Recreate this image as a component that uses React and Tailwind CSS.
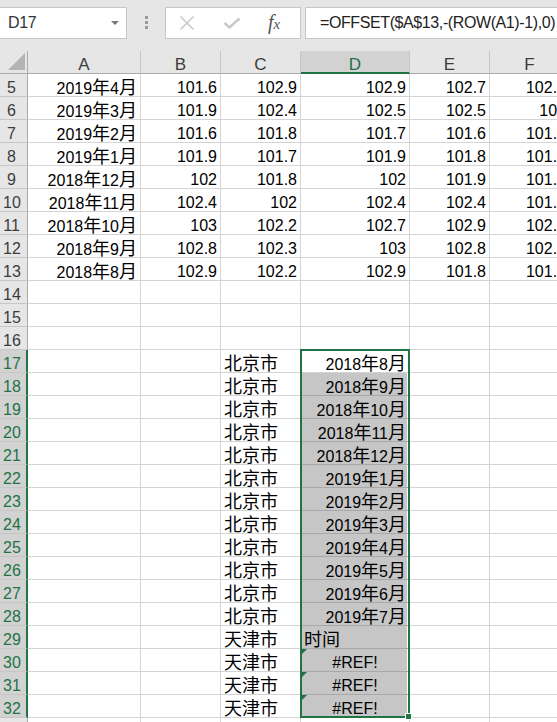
import React from "react";

const GREEN = "#217346";

const W = {
  A: "w-[113px]",
  B: "w-[80px]",
  C: "w-[80px]",
  D: "w-[109px]",
  E: "w-[80px]",
  F: "w-[80px]",
};
const COLS = ["A", "B", "C", "D", "E", "F"];

const dataRows = [
  [5, "2019年4月", "101.6", "102.9", "102.9", "102.7", "102.1"],
  [6, "2019年3月", "101.9", "102.4", "102.5", "102.5", "102"],
  [7, "2019年2月", "101.6", "101.8", "101.7", "101.6", "101.4"],
  [8, "2019年1月", "101.9", "101.7", "101.9", "101.8", "101.6"],
  [9, "2018年12月", "102", "101.8", "102", "101.9", "101.6"],
  [10, "2018年11月", "102.4", "102", "102.4", "102.4", "101.6"],
  [11, "2018年10月", "103", "102.2", "102.7", "102.9", "102.1"],
  [12, "2018年9月", "102.8", "102.3", "103", "102.8", "102.3"],
  [13, "2018年8月", "102.9", "102.2", "102.9", "101.8", "101.6"],
];

const months = [
  "2018年8月",
  "2018年9月",
  "2018年10月",
  "2018年11月",
  "2018年12月",
  "2019年1月",
  "2019年2月",
  "2019年3月",
  "2019年4月",
  "2019年5月",
  "2019年6月",
  "2019年7月",
];

function buildRows() {
  const rows = [];
  dataRows.forEach((r) => {
    const cells = {};
    COLS.forEach((c, i) => {
      cells[c] = { t: r[i + 1], align: "right" };
    });
    rows.push({ n: r[0], cells });
  });
  [14, 15, 16].forEach((n) => rows.push({ n, cells: {} }));
  months.forEach((m, i) => {
    rows.push({
      n: 17 + i,
      sel: true,
      cells: {
        C: { t: "北京市", align: "left" },
        D: { t: m, align: "right", gray: i > 0 },
      },
    });
  });
  rows.push({
    n: 29,
    sel: true,
    cells: {
      C: { t: "天津市", align: "left" },
      D: { t: "时间", align: "left", gray: true },
    },
  });
  [30, 31, 32].forEach((n) =>
    rows.push({
      n,
      sel: true,
      cells: {
        C: { t: "天津市", align: "left" },
        D: { t: "#REF!", align: "center", gray: true, err: true },
      },
    })
  );
  rows.push({ n: 33, cells: {} });
  return rows;
}

function Txt({ t }) {
  const parts = [];
  let buf = "";
  let cjk = null;
  for (const ch of t) {
    const isC = /[\u3000-\u9fff]/.test(ch);
    if (cjk === null || isC === cjk) {
      buf += ch;
    } else {
      parts.push({ s: buf, c: cjk });
      buf = ch;
    }
    cjk = isC;
  }
  if (buf) parts.push({ s: buf, c: cjk });
  return (
    <>
      {parts.map((p, i) =>
        p.c ? (
          <span key={i} className="text-[18px]">
            {p.s}
          </span>
        ) : (
          <span key={i}>{p.s}</span>
        )
      )}
    </>
  );
}

function Cell({ col, cell }) {
  const align =
    cell && cell.align === "left"
      ? "text-left pl-[3px]"
      : cell && cell.align === "center"
      ? "text-center"
      : "text-right pr-[3px]";
  const gray =
    cell && cell.gray
      ? "bg-[#c6c6c6] border-b-[#a8a8a8] shadow-[inset_-2px_0_0_#ffffff]"
      : "bg-white";
  return (
    <div
      className={`${W[col]} ${align} ${gray} relative h-[23px] shrink-0 whitespace-nowrap border-r border-b border-[#d4d4d4] pt-[6px] text-[16px] leading-[16px] text-black`}
    >
      {cell && cell.err && (
        <svg
          className="absolute left-0 top-0"
          width="7"
          height="7"
          viewBox="0 0 7 7"
        >
          <polygon points="0,0 6,0 0,6" fill="#1e7145" />
        </svg>
      )}
      {cell ? <Txt t={cell.t} /> : ""}
    </div>
  );
}

function RowHeader({ n, sel }) {
  return (
    <div
      className={
        sel
          ? "w-[28px] h-[23px] shrink-0 border-b border-[#c6c6c6] border-r-2 border-r-[#217346] bg-[#d2d2d2] pt-[6px] pl-[3px] text-[16px] leading-[16px] text-[#217346]"
          : "w-[28px] h-[23px] shrink-0 border-b border-[#c6c6c6] border-r border-r-[#ababab] bg-[#e6e6e6] pt-[6px] pl-[3px] text-[16px] leading-[16px] text-[#3c3c3c]"
      }
    >
      <div className="w-[17px] text-center">{n}</div>
    </div>
  );
}

export default function App() {
  const rows = buildRows();
  return (
    <div className="relative w-[557px] h-[722px] overflow-hidden bg-white font-['Liberation_Sans','Noto_Sans_CJK_SC',sans-serif]">
      {/* Formula bar */}
      <div className="flex h-[51px] items-start bg-[#e6e6e6] pt-[7px]">
        <div className="flex h-[32px] w-[127px] shrink-0 items-center justify-between border border-l-0 border-[#c6c6c6] bg-white pl-[8px] pr-[7px]">
          <span className="text-[16px] leading-[16px] tracking-[-0.3px] text-[#333]">D17</span>
          <svg width="8" height="5" viewBox="0 0 8 5">
            <polygon points="0,0 8,0 4,4" fill="#7a7a7a" />
          </svg>
        </div>
        <div className="flex w-[38px] shrink-0 flex-col items-center gap-[2px] pt-[9px]">
          <div className="h-[3px] w-[3px] bg-[#9a9a9a]" />
          <div className="h-[3px] w-[3px] bg-[#9a9a9a]" />
          <div className="h-[3px] w-[3px] bg-[#9a9a9a]" />
        </div>
        <div className="flex h-[32px] w-[136px] shrink-0 items-center border border-[#c6c6c6] bg-white">
          <svg className="ml-[13px]" width="16" height="16" viewBox="0 0 16 16">
            <path d="M1.5 1.5 L14.5 14.5 M14.5 1.5 L1.5 14.5" stroke="#c8c8c8" strokeWidth="1.5" fill="none" />
          </svg>
          <svg className="ml-[28px]" width="18" height="12" viewBox="0 0 18 12">
            <path d="M1.5 6 L6.5 10.5 L16.5 1.5" stroke="#c8c8c8" strokeWidth="2.4" fill="none" />
          </svg>
          <span className="ml-[27px] font-['Liberation_Serif',serif] text-[20px] italic leading-[20px] text-[#555]">
            f<span className="text-[15px]">x</span>
          </span>
        </div>
        <div className="ml-[4px] flex h-[32px] flex-1 items-center border border-r-0 border-[#c6c6c6] bg-white pl-[14px]">
          <span className="whitespace-nowrap text-[16px] leading-[16px] tracking-[-0.4px] text-[#222]">
            =OFFSET($A$13,-(ROW(A1)-1),0)
          </span>
        </div>
      </div>

      {/* Column header */}
      <div className="flex">
        <div className="relative h-[23px] w-[28px] shrink-0 border-r border-b border-[#ababab] bg-[#e6e6e6]">
          <svg className="absolute left-0 top-0" width="27" height="22" viewBox="0 0 27 22">
            <polygon points="8,19 25,19 25,2" fill="#b4b4b4" />
          </svg>
        </div>
        {COLS.map((c) =>
          c === "D" ? (
            <div
              key={c}
              className={`${W[c]} h-[23px] shrink-0 border-r border-r-[#c6c6c6] border-b-2 border-b-[#217346] bg-[#d2d2d2] pt-[5px] text-center text-[17px] leading-[17px] text-[#217346]`}
            >
              {c}
            </div>
          ) : (
            <div
              key={c}
              className={`${W[c]} h-[23px] shrink-0 border-r border-r-[#c6c6c6] border-b border-b-[#ababab] bg-[#e6e6e6] pt-[5px] text-center text-[17px] leading-[17px] text-[#3c3c3c]`}
            >
              {c}
            </div>
          )
        )}
      </div>

      {/* Grid rows */}
      {rows.map((r) => (
        <div key={r.n} className="flex">
          <RowHeader n={r.n} sel={r.sel} />
          {COLS.map((c) => (
            <Cell key={c} col={c} cell={r.cells[c]} />
          ))}
        </div>
      ))}

      {/* Selection outline */}
      <div
        className="pointer-events-none absolute left-[300px] top-[349px] h-[369px] w-[110px] border-2"
        style={{ borderColor: GREEN }}
      />
      <div className="pointer-events-none absolute left-[405px] top-[713px] h-[7px] w-[7px] border border-white bg-[#217346]" />
    </div>
  );
}
